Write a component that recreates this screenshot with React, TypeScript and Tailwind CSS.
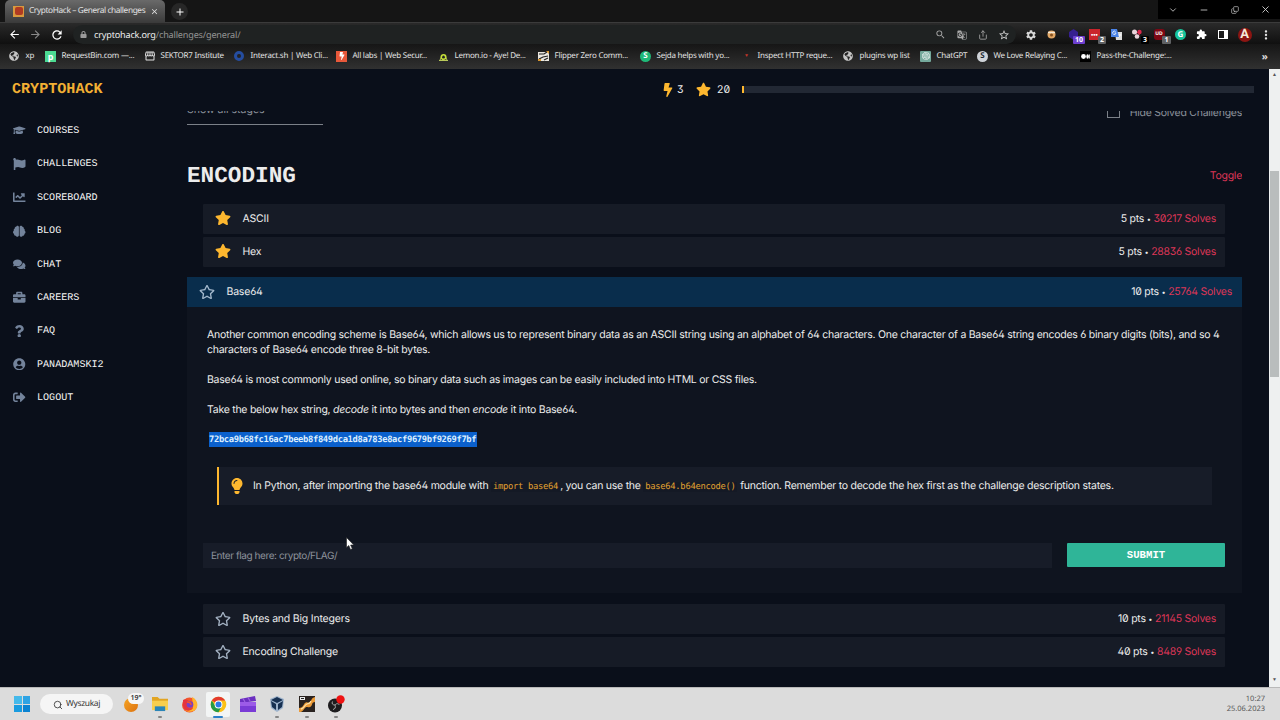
import type { ReactNode } from 'react';
import {
  FaGraduationCap, FaFlag, FaChartLine, FaBrain, FaComments, FaBriefcase, FaQuestion,
  FaUserCircle, FaSignOutAlt, FaStar, FaRegStar, FaBolt, FaLightbulb, FaLock, FaGlobeAmericas,
} from 'react-icons/fa';
import {
  MdArrowBack, MdArrowForward, MdRefresh, MdSearch, MdGTranslate, MdStarBorder, MdExtension,
  MdMoreVert, MdSettings, MdClose, MdAdd, MdStorefront,
} from 'react-icons/md';
import { SiOpenai } from 'react-icons/si';
import { ChevronDown, Minus, Copy, X, Share, Search } from 'lucide-react';

const bookmarks: { label: string; width: string; icon: ReactNode }[] = [
  { label: 'xp', width: 'w-[36px]', icon: <FaGlobeAmericas className="size-[10px] text-[#c4c4c4]" /> },
  { label: 'RequestBin.com —...', width: 'w-[99px]', icon: <span className="flex size-[11px] items-center justify-center bg-[#4cdb92] text-[9px] font-bold leading-none text-white">p</span> },
  { label: 'SEKTOR7 Institute', width: 'w-[90px]', icon: <MdStorefront className="size-[12px] text-[#e4e4e4]" /> },
  { label: 'Interact.sh | Web Cli...', width: 'w-[102px]', icon: <span className="size-[10px] rounded-full border-[3px] border-[#254da0]" /> },
  { label: 'All labs | Web Secur...', width: 'w-[102px]', icon: <span className="flex size-[11px] items-center justify-center bg-[#e8583a]"><FaBolt className="size-[8px] text-white" /></span> },
  {
    label: 'Lemon.io - Aye! De...', width: 'w-[100px]',
    icon: (
      <svg className="size-[11px]" viewBox="0 0 11 11" fill="none">
        <path d="M1 9.5h9M2 9l2-4M9 9 7 5" stroke="#b9c95a" />
        <circle cx="5.5" cy="6" r="2.3" stroke="#c6e03a" strokeWidth="1.5" />
      </svg>
    ),
  },
  {
    label: 'Flipper Zero Comm...', width: 'w-[102px]',
    icon: (
      <svg className="size-[11px]" viewBox="0 0 11 11">
        <path d="M0 1h11v9H0z" fill="#e9e6df" />
        <path d="M1 3h5l3-2M1 8l4-2 5-1M6 9l4-2" stroke="#222" strokeWidth="1.2" fill="none" />
        <path d="M8 0h3v3zM0 8h3v2H0z" fill="#d9962e" />
      </svg>
    ),
  },
  { label: 'Sejda helps with yo...', width: 'w-[101px]', icon: <span className="flex size-[11px] items-center justify-center rounded-full bg-[#1fb978] text-[8px] font-bold leading-none text-white">S</span> },
  { label: 'Inspect HTTP reque...', width: 'w-[102px]', icon: <span className="ml-[3px] text-[5px] leading-none text-[#c43529]">▼</span> },
  { label: 'plugins wp list', width: 'w-[77px]', icon: <FaGlobeAmericas className="size-[10px] text-[#c4c4c4]" /> },
  { label: 'ChatGPT', width: 'w-[57px]', icon: <span className="flex size-[11px] items-center justify-center rounded-[1px] bg-[#75a99c]"><SiOpenai className="size-[8px] text-white" /></span> },
  { label: 'We Love Relaying C...', width: 'w-[103px]', icon: <span className="flex size-[11px] items-center justify-center rounded-full bg-[#cfd3d8] text-[8px] font-bold leading-none text-[#20262e]">S</span> },
  {
    label: 'Pass-the-Challenge:...', width: 'w-[102px]',
    icon: (
      <svg className="size-[11px]" viewBox="0 0 11 11">
        <path d="M0 0h11v11H0z" />
        <circle cx="3.5" cy="5.5" r="2.4" fill="#fff" />
        <ellipse cx="7.6" cy="5.5" rx="1.3" ry="2.3" fill="#fff" />
        <path d="M9.5 3.5v4" stroke="#fff" strokeWidth=".8" />
      </svg>
    ),
  },
];

const navItems = [
  { label: 'COURSES', icon: FaGraduationCap },
  { label: 'CHALLENGES', icon: FaFlag },
  { label: 'SCOREBOARD', icon: FaChartLine },
  { label: 'BLOG', icon: FaBrain },
  { label: 'CHAT', icon: FaComments },
  { label: 'CAREERS', icon: FaBriefcase },
  { label: 'FAQ', icon: FaQuestion },
  { label: 'PANADAMSKI2', icon: FaUserCircle },
  { label: 'LOGOUT', icon: FaSignOutAlt },
];

function Badge({ children, className }: { children: ReactNode; className: string }) {
  return (
    <span className={`absolute -right-[6px] -bottom-[4px] flex h-[8px] items-center justify-center rounded-[1px] px-[2px] text-[7px] font-bold leading-none text-white ${className}`}>
      {children}
    </span>
  );
}

function Extensions() {
  return (
    <div className="flex items-center">
      <div className="flex w-[21px]"><MdSettings className="size-[12px] text-[#d8d8d8]" /></div>
      <div className="flex w-[22px] pl-px">
        <svg className="size-[9px]" viewBox="0 0 9 9">
          <circle cx="4.5" cy="4.5" r="4" fill="#e2a765" />
          <path d="M1 2.5h7" stroke="#f4ead8" strokeWidth="1.5" />
          <circle cx="4.5" cy="5" r="1.5" fill="#87521f" />
        </svg>
      </div>
      <div className="flex w-[21px]">
        <div className="relative size-[11px]">
          <svg viewBox="0 0 11 11"><path d="M5.5 0 10 3v5l-4.5 3L1 8V3z" fill="#35208f" /></svg>
          <Badge className="bg-[#6d3fd0]">10</Badge>
        </div>
      </div>
      <div className="flex w-[21.5px]">
        <div className="relative flex size-[11px] items-center justify-center bg-[#c9242b] text-[6px] font-bold leading-none text-white">
          •••
          <Badge className="bg-[#5f6163]">2</Badge>
        </div>
      </div>
      <div className="flex w-[21.5px]">
        <svg className="size-[11px]" viewBox="0 0 11 11">
          <path d="M4 3h7v8H5z" fill="#dcdcdc" />
          <path d="M0 0h6l2 8H0z" fill="#4a83e8" />
          <path d="M5 4H3.5M5 4.2A1.7 1.7 0 1 1 4.5 2.5M7.5 6h3M9 5v1c0 1-1 2-1.5 2.5" stroke="#fff" strokeWidth=".8" fill="none" />
        </svg>
      </div>
      <div className="flex w-[21.5px]">
        <div className="relative size-[11px]">
          <svg viewBox="0 0 11 11">
            <path d="m3 3 5 1-2 4z" stroke="#d9274c" fill="none" />
            <circle cx="2.5" cy="3" r="2.5" fill="#e8d3da" />
            <circle cx="7.5" cy="3" r="2.2" fill="#d9274c" />
            <circle cx="5" cy="7.5" r="2.3" fill="#e8d3da" />
          </svg>
          <Badge className="bg-black">3</Badge>
        </div>
      </div>
      <div className="flex w-[21.5px]">
        <div className="relative flex size-[11px] items-center justify-center rounded-[3px] bg-[#7d0714] text-[5px] font-bold leading-none text-white">
          UD
          <Badge className="bg-[#5f6163]">1</Badge>
        </div>
      </div>
      <div className="flex w-[21px]">
        <span className="flex size-[11px] items-center justify-center rounded-full bg-[#15c39a] text-[8px] font-bold leading-none text-white">G</span>
      </div>
      <div className="flex w-[21.5px]"><MdExtension className="size-[11px] text-white" /></div>
      <div className="flex w-[20px]"><span className="h-[9px] w-[10px] border-[1.5px] border-r-[4px] border-white" /></div>
      <div className="flex w-[21px]">
        <span className="flex size-[14px] items-center justify-center rounded-full bg-[#8c1512] font-['Roboto'] text-[13px] font-bold leading-none text-[#f5e9d8]">A</span>
      </div>
      <MdMoreVert className="size-[14px] text-[#e4e4e4]" />
    </div>
  );
}

function BrowserChrome() {
  return (
    <div className="h-[69px] shrink-0 font-['Noto_Sans',sans-serif] text-[#e2e2e2]">
      <div className="flex h-[22px] justify-between bg-[#151515]">
        <div className="flex pl-[5px]">
          <div className="flex h-[22px] w-[160px] items-center rounded-t-[5px] bg-gradient-to-b from-[#6a6a6a] to-[#3c3c3c] pl-[8px]">
            <span className="flex size-[11px] items-center justify-center bg-[#d9993e]"><span className="size-[8px] rounded-[2px] bg-[#b03a22]" /></span>
            <span className="ml-[5px] w-[121px] whitespace-nowrap text-[8.3px] tracking-[-0.38px]">CryptoHack – General challenges</span>
            <MdClose className="size-[9px]" />
          </div>
          <div className="ml-[6px] mt-[3px] flex size-[17px] items-center justify-center rounded-full bg-[#272727]"><MdAdd className="size-[12px] text-white" /></div>
        </div>
        <div className="flex h-[19px] w-[122px] items-center bg-black text-[#cfcfcf]">
          <span className="flex w-[30px] justify-center"><ChevronDown className="size-[10px]" /></span>
          <span className="flex w-[31px] justify-center"><Minus className="size-[10px]" /></span>
          <span className="flex w-[31px] justify-center"><Copy className="size-[8px] -scale-x-100 rotate-180" /></span>
          <span className="flex w-[30px] justify-center"><X className="size-[11px]" /></span>
        </div>
      </div>
      <div className="flex h-[22px] items-center border-t border-[#3b3b3b] bg-gradient-to-b from-[#2a2a2a] to-[#101010] pl-[8px] pt-[2px]">
        <MdArrowBack className="size-[13px] text-white" />
        <MdArrowForward className="ml-[8px] size-[13px] text-[#8a8a8a]" />
        <MdRefresh className="ml-[8px] size-[14px] text-white" />
        <div className="ml-[9px] flex h-[19px] w-[943px] items-center rounded-full bg-[#1f2222] pl-[7px] text-[#aaa]">
          <FaLock className="size-[7px] text-[#9a9a9a]" />
          <span className="ml-[7px] flex-1 whitespace-nowrap text-[9.1px] tracking-[-0.18px] text-[#949494]"><span className="text-[#ededed]">cryptohack.org</span>/challenges/general/</span>
          <MdSearch className="size-[11px]" />
          <MdGTranslate className="ml-[11px] size-[10px]" />
          <Share className="ml-[11px] size-[10px]" />
          <MdStarBorder className="mr-[6px] ml-[10px] size-[12px] text-[#d0d0d0]" />
        </div>
        <div className="ml-[9px]"><Extensions /></div>
      </div>
      <div className="flex h-[25px] items-center bg-gradient-to-b from-[#161616] to-[#313131] pb-[1px] pl-[9px]">
        {bookmarks.map((b) => (
          <div key={b.label} className={`flex shrink-0 items-center ${b.width}`}>
            <span className="flex w-[16.5px] shrink-0 items-center justify-start">{b.icon}</span>
            <span className="whitespace-nowrap text-[8px] tracking-[-0.25px]">{b.label}</span>
          </div>
        ))}
        <span className="ml-auto mr-[12px] text-[10px] font-bold leading-none">»</span>
      </div>
    </div>
  );
}

function Points({ pts, solves }: { pts: number; solves: number }) {
  return (
    <span className="ml-auto whitespace-nowrap">
      {pts} pts <span className="text-[7.5px]">•</span> <span className="text-[#dd3657]">{solves} Solves</span>
    </span>
  );
}

function ChallengeRow({ name, pts, solves, solved }: { name: string; pts: number; solves: number; solved?: boolean }) {
  return (
    <div className="ml-[16px] mr-[17px] mb-[3px] flex h-[30px] items-center rounded-[1px] bg-[#161b26] pl-[12px] pr-[9px]">
      {solved ? <FaStar className="mb-[2px] size-[16px] text-[#fdb72f]" /> : <FaRegStar className="mb-px size-[16px] text-[#a3b1c2]" />}
      <span className="ml-[11.5px] tracking-[-0.2px]">{name}</span>
      <Points pts={pts} solves={solves} />
    </div>
  );
}

function Sidebar() {
  return (
    <nav className="w-[187px] shrink-0 pl-[13px] pt-[3px]">
      {navItems.map(({ label, icon: Icon }) => (
        <a key={label} className="flex h-[33.37px] items-center font-['Liberation_Mono',monospace] text-[10.1px] text-[#f4f4f4]">
          <span className="flex w-[24px]"><Icon className="h-[12.5px] w-auto text-[#73839b]" /></span>
          <span className="pt-[2px]">{label}</span>
        </a>
      ))}
    </nav>
  );
}

function Code({ children }: { children: ReactNode }) {
  return (
    <code className="rounded-[1px] bg-[#141925] px-[2px] font-['DejaVu_Sans_Mono',monospace] text-[8.8px] tracking-[-0.29px] text-[#e0a030]">{children}</code>
  );
}

function Base64Challenge() {
  return (
    <div className="mt-[10px] mb-[11px] h-[316px] bg-[#0f141f]">
      <div className="flex h-[30px] items-center bg-[#092d4c] pl-[12px] pr-[10px]">
        <FaRegStar className="size-[16px] text-[#a3b8cc]" />
        <span className="ml-[11.5px] tracking-[-0.2px]">Base64</span>
        <Points pts={10} solves={25764} />
      </div>
      <div className="px-[20px] pt-[20px] leading-[15px]">
        <p className="whitespace-nowrap">
          Another common encoding scheme is Base64, which allows us to represent binary data as an ASCII string using an alphabet of 64 characters. One character of a Base64 string encodes 6 binary digits (bits), and so 4<br />
          characters of Base64 encode three 8-bit bytes.
        </p>
        <p className="mt-[15px]">Base64 is most commonly used online, so binary data such as images can be easily included into HTML or CSS files.</p>
        <p className="mt-[15px]">Take the below hex string, <i>decode</i> it into bytes and then <i>encode</i> it into Base64.</p>
        <div className="mt-[15px] ml-[2px] flex h-[15px] w-[268px] items-center bg-[#0b60cb] pt-px font-['DejaVu_Sans_Mono',monospace] text-[8.8px] font-bold tracking-[-0.347px] text-[#dbeeff]">
          72bca9b68fc16ac7beeb8f849dca1d8a783e8acf9679bf9269f7bf
        </div>
      </div>
      <div className="mx-[30px] mt-[20px] flex h-[38px] items-center whitespace-nowrap border-l-2 border-[#fdb72f] bg-[#171c28] pl-[10px]">
        <FaLightbulb className="mr-[8px] size-[16px] text-[#fdb72f]" />
        <span>In Python, after importing the base64 module with <Code>import base64</Code>, you can use the <Code>base64.b64encode()</Code> function. Remember to decode the hex first as the challenge description states.</span>
      </div>
      <div className="ml-[16px] mr-[17px] mt-[38px] flex items-start gap-[15px]">
        <div className="flex h-[25px] flex-1 items-center bg-[#171c28] pt-px pl-[8px] text-[10px] tracking-[-0.42px] text-[#8d929b]">Enter flag here: crypto/FLAG/</div>
        <button className="h-[24px] w-[158px] rounded-[1px] bg-[#2fb598] font-['Liberation_Mono',monospace] text-[10.7px] font-bold tracking-normal text-white">SUBMIT</button>
      </div>
    </div>
  );
}

function TaskIcon({ children, running, active }: { children: ReactNode; running?: boolean; active?: boolean }) {
  return (
    <div className={`relative mx-[2.7px] flex h-[25px] w-[24px] items-center justify-center rounded-[2px] ${active ? 'bg-[#f3f5f5]' : ''}`}>
      {children}
      {running && <span className="absolute -bottom-[1px] h-[2px] w-[4px] rounded-full bg-[#858585]" />}
      {active && <span className="absolute -bottom-[1px] h-[2px] w-[10px] rounded-full bg-[#2b7fc9]" />}
    </div>
  );
}

function Taskbar() {
  return (
    <footer className="flex h-[33px] items-center border-t border-[#b9b9b9] bg-[#dcdcdc] pl-[14px] font-['Noto_Sans',sans-serif] text-[#333]">
      <div className="grid size-[16px] grid-cols-2 gap-px">
        <span className="bg-[#45b9ea]" /><span className="bg-[#2ea3e4]" /><span className="bg-[#199bdf]" /><span className="bg-[#0b83d2]" />
      </div>
      <div className="ml-[10px] flex h-[20px] w-[73px] items-center rounded-full bg-[#f5f5f5] pt-px pl-[13px] text-[8.4px] tracking-[-0.3px]">
        <Search className="mr-[3px] size-[10px]" /><span>Wyszukaj</span>
      </div>
      <div className="relative ml-[11px] h-[17px] w-[21px]">
        <span className="mt-[2px] block size-[14px] rounded-full bg-gradient-to-br from-[#f5a524] to-[#dd7210]" />
        <span className="absolute -top-[3px] left-[4px] flex h-[11px] w-[16px] items-center justify-center rounded-full bg-[#f6f6f6] text-[7px] font-semibold leading-none">19°</span>
      </div>
      <div className="flex">
        <TaskIcon running>
          <svg className="size-[16px]" viewBox="0 0 17 17">
            <path d="M0 1h6l2 2h9v12H0z" fill="#e2a523" /><path d="M0 5h17v10H0z" fill="#f8cf4d" /><path d="M3 11h11v5H3z" fill="#2a85b8" />
          </svg>
        </TaskIcon>
        <TaskIcon>
          <svg className="size-[17px]" viewBox="0 0 17 17">
            <circle cx="8.5" cy="9" r="7.5" fill="#f2552c" />
            <path d="M11 1c5 2 7 8 4 12-2 3-8 4-11 1 5 2 9-1 8-5z" fill="#ffb42e" />
            <path d="M2 4c3-1 5 0 7 2L6 9c0 3 3 4 6 3-3 4-10 3-10-3z" fill="#e5333f" />
            <circle cx="9" cy="8.5" r="3.3" fill="#7a3fc4" /><path d="M6 6c2 0 4 1 4 3" stroke="#f2552c" strokeWidth="1.5" fill="none" />
          </svg>
        </TaskIcon>
        <TaskIcon active>
          <svg className="size-[17px]" viewBox="0 0 24 24">
            <circle cx="12" cy="12" r="11" fill="#fbc116" />
            <path d="M12 12 2.5 6.5A11 11 0 0 1 21.5 6.5H12z" fill="#e33b2e" />
            <path d="M2.5 6.5A11 11 0 0 0 12 23l4.5-8.5L7.5 14z" fill="#249a45" />
            <circle cx="12" cy="12" r="5.5" fill="#fff" /><circle cx="12" cy="12" r="4.2" fill="#2d7be5" />
          </svg>
        </TaskIcon>
        <TaskIcon>
          <svg className="size-[16px]" viewBox="0 0 16 16">
            <path d="m0 3 15-3 1 5-16 2z" fill="#6b2fc0" /><path d="m3 2.500 2 3.500M8 1.500l2 3.500" stroke="#9d63e0" strokeWidth="1.2" />
            <path d="M0 6h16v4H0z" fill="#9c5be8" /><path d="M0 10h16v6H0z" fill="#7a3bd6" />
          </svg>
        </TaskIcon>
        <TaskIcon running>
          <svg className="size-[16px]" viewBox="0 0 16 16">
            <path d="m8 0 7 3-1 9-6 4-6-4L1 3z" fill="#9db3cc" />
            <path d="m8 1 6 3-6 3-6-3zM2 5l5 3v6l-4-3zM14 5 9 8v6l4-3z" fill="#173152" />
          </svg>
        </TaskIcon>
        <TaskIcon running>
          <svg className="size-[16px]" viewBox="0 0 16 16">
            <path d="M0 0h16v16H0z" fill="#29221f" />
            <path d="M0 12c4 0 4-3 6-5s3 1 5-1 1-4 5-5v5c-4 0-2 4-5 5s-3-1-5 1-2 4-6 4z" fill="#ec9a36" />
            <path d="M2 13c4-1 3-4 6-5s3-1 4-3" stroke="#fbe0a8" strokeWidth="1.3" fill="none" />
            <path d="M1 1h5v3H1z" fill="#e9e9e9" /><path d="M2 2.5h3" stroke="#222" />
          </svg>
        </TaskIcon>
        <TaskIcon running>
          <svg className="size-[18px]" viewBox="0 0 18 18">
            <circle cx="8" cy="10.5" r="7" fill="#1d1c1e" />
            <path d="M8 10c-2.500 0-3.500-1.500-2.500-3.500M8 10c1.500-2 3.500-1.500 4.500 0M8 10c1 2.500 0 4-2 4.500" stroke="#a9a9a9" fill="none" />
            <circle cx="13.5" cy="4.5" r="4.2" fill="#ee1212" />
          </svg>
        </TaskIcon>
      </div>
      <div className="ml-auto mr-[15px] text-right text-[7.5px] leading-[10.5px] text-[#555]"><div>10:27</div><div>25.06.2023</div></div>
    </footer>
  );
}

export default function App() {
  return (
    <div className="flex h-[720px] w-[1280px] flex-col overflow-hidden bg-[#0a0f1a] [text-rendering:geometricPrecision]">
      <BrowserChrome />
      <div className="flex min-h-0 flex-1">
        <div className="flex min-w-0 flex-1 flex-col font-['Inter',sans-serif] text-[10.5px] text-[#ececec] [font-feature-settings:'zero','ss01']">
          <header className="flex h-[42px] shrink-0 items-center pb-[1px] pl-[12px] pr-[15px]">
            <span className="w-[649px] font-['Liberation_Mono',monospace] text-[15.1px] font-bold text-[#f2b033]">CRYPTOHACK</span>
            <FaBolt className="size-[14px] text-[#fdb72f]" />
            <span className="ml-[2px] w-[7px]">3</span>
            <FaStar className="ml-[12px] size-[15px] text-[#fdb72f]" />
            <span className="ml-[6px] w-[13px]">20</span>
            <div className="ml-[12px] h-[7px] flex-1 bg-[#222834]"><div className="h-full w-[2px] bg-[#fdb72f]" /></div>
          </header>
          <div className="flex min-h-0 flex-1">
            <Sidebar />
            <main className="w-[1055px] overflow-hidden tracking-[-0.258px]">
              <div className="-mt-[9px] flex h-[23px] items-start justify-between text-[#8b919b]">
                <div className="flex h-[23px] w-[136px] justify-between border-b border-[#7b8088]">
                  <span className="leading-[16px] tracking-normal">Show all stages</span><ChevronDown className="mt-[4px] size-[8px]" />
                </div>
                <div className="flex items-center pt-[3px] leading-[15px]"><span className="mr-[10px] mb-[2px] size-[13px] border border-[#7b8088]" />Hide Solved Challenges</div>
              </div>
              <div className="flex h-[79px] items-center justify-between pt-[23px]">
                <h1 className="font-['Liberation_Mono',monospace] text-[22.7px] font-bold tracking-normal">ENCODING</h1>
                <span className="text-[#dd3657]">Toggle</span>
              </div>
              <ChallengeRow name="ASCII" pts={5} solves={30217} solved />
              <ChallengeRow name="Hex" pts={5} solves={28836} solved />
              <Base64Challenge />
              <ChallengeRow name="Bytes and Big Integers" pts={10} solves={21145} />
              <ChallengeRow name="Encoding Challenge" pts={40} solves={8489} />
            </main>
          </div>
        </div>
        <div className="flex w-[11px] flex-col items-center bg-[#eef0f0]">
          <span className="h-[102px] pt-[4px] text-[5px] leading-none text-[#555]">▲</span>
          <div className="h-[206px] w-[9px] bg-[#b9bdbd]" />
          <span className="mt-auto pb-[4px] text-[5px] leading-none text-[#555]">▼</span>
        </div>
      </div>
      <Taskbar />
      <svg className="absolute left-[346px] top-[537px] h-[13px] w-[9px]" viewBox="0 0 9 13"><path d="M.5.5v10l2.3-2 1.7 4 1.8-.8-1.7-3.7h3.2z" fill="#fff" stroke="#222" strokeWidth=".6" /></svg>
    </div>
  );
}
